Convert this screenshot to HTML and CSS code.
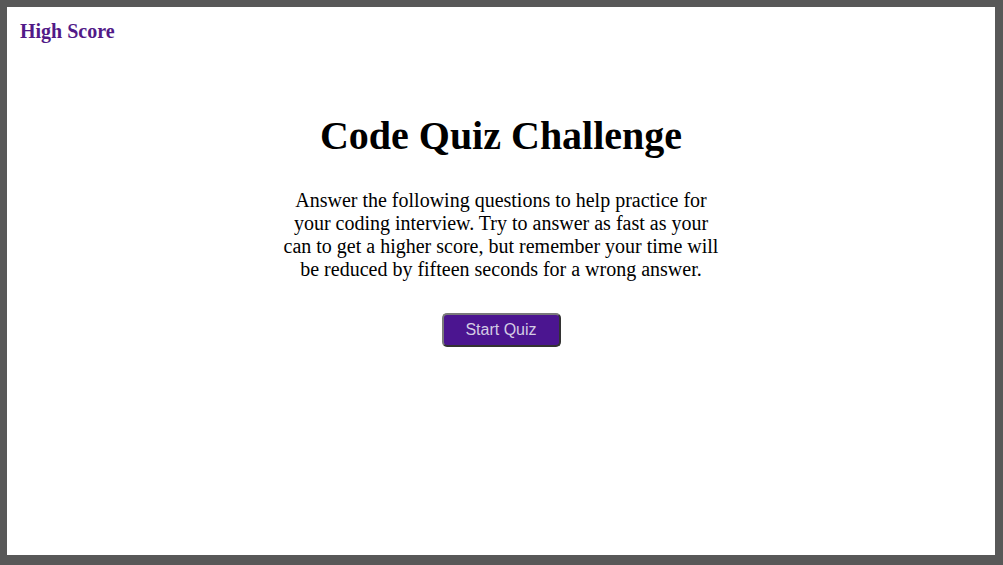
FILE: index.html
```html
<!DOCTYPE html>
<html>
<head>
<meta charset="utf-8">
<link rel="stylesheet" href="styles.css">
</head>
<body>
<header class="topbar">
  <a class="high-score">High Score</a>
</header>
<main class="intro">
  <h1 class="title">Code Quiz Challenge</h1>
  <p class="desc">Answer the following questions to help practice for your coding interview. Try to answer as fast as your can to get a higher score, but remember your time will be reduced by fifteen seconds for a wrong answer.</p>
  <button class="start-btn">Start Quiz</button>
</main>
</body>
</html>
```
FILE: styles.css
```css
html {
  background: #585858;
  height: 100%;
}
body {
  margin: 7px 8px 10px 7px;
  background: #ffffff;
  height: 548px;
  box-sizing: border-box;
  font-family: "Liberation Serif", "Times New Roman", serif;
  color: #000;
  overflow: hidden;
}
.topbar {
  padding: 13px 13px 0;
  height: 40px;
  box-sizing: border-box;
}
.high-score {
  font-weight: bold;
  font-size: 20px;
  color: #521a88;
  line-height: 22px;
}
.intro {
  display: flex;
  flex-direction: column;
  align-items: center;
  padding-top: 66px;
}
.title {
  font-size: 40px;
  font-weight: bold;
  margin: 0;
  line-height: 46px;
}
.desc {
  width: 440px;
  text-align: center;
  font-size: 20px;
  line-height: 23px;
  margin: 30px 0 0;
}
.start-btn {
  margin-top: 32px;
  width: 119px;
  height: 34px;
  background: #4b1590;
  color: #d4cce4;
  border: 2px solid;
  border-color: #7a7a7a #333333 #333333 #7a7a7a;
  border-radius: 5px;
  font-family: "Liberation Sans", Arial, sans-serif;
  font-size: 16px;
  padding: 0;
}
```
